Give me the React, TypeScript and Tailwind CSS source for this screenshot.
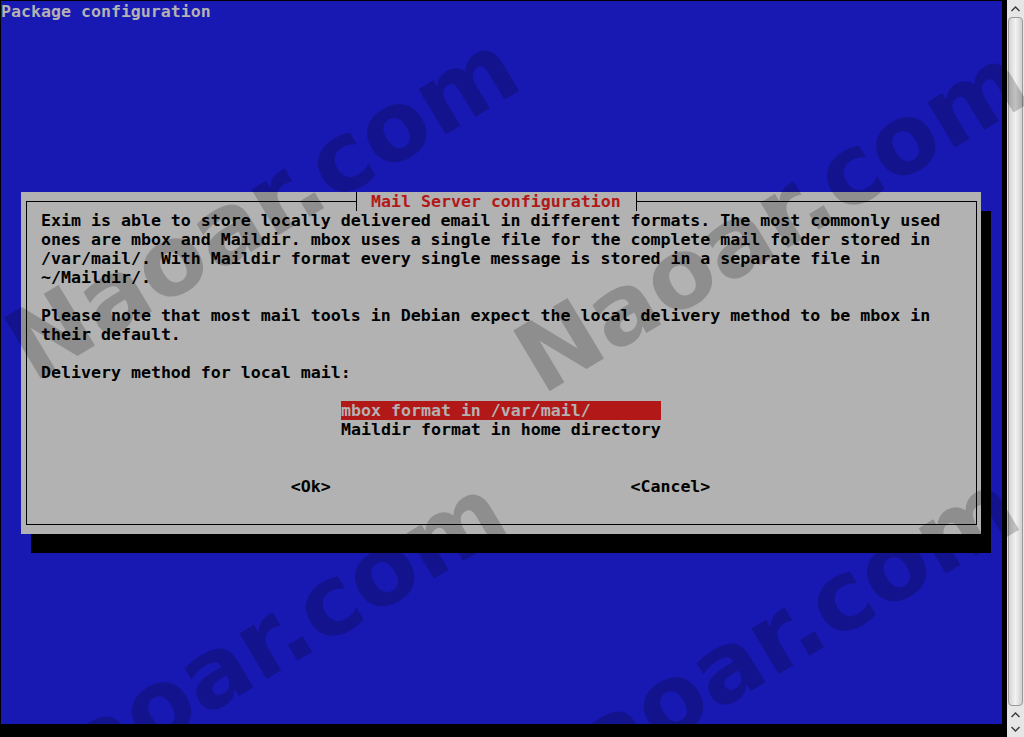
import React from "react";

const body: string[] = [
  "Exim is able to store locally delivered email in different formats. The most commonly used",
  "ones are mbox and Maildir. mbox uses a single file for the complete mail folder stored in",
  "/var/mail/. With Maildir format every single message is stored in a separate file in",
  "~/Maildir/.",
  "",
  "Please note that most mail tools in Debian expect the local delivery method to be mbox in",
  "their default.",
  "",
  "Delivery method for local mail:",
  "",
];

const buttons = " ".repeat(25) + "<Ok>" + " ".repeat(30) + "<Cancel>";

function Chevron({ up }: { up: boolean }) {
  return (
    <svg width="11" height="7" viewBox="0 0 11 7" className="block">
      <polyline
        points={up ? "1.5,6 5.5,2 9.5,6" : "1.5,1 5.5,5 9.5,1"}
        fill="none"
        stroke="#3a3a3a"
        strokeWidth="1.4"
      />
    </svg>
  );
}

function Watermark({ x, y }: { x: number; y: number }) {
  return (
    <div
      className="absolute pointer-events-none whitespace-nowrap font-['DejaVu_Sans'] font-bold text-[97px] leading-none text-black/20 -translate-x-1/2 -translate-y-1/2 rotate-[-31deg]"
      style={{ left: x, top: y }}
    >
      Naoar.com
    </div>
  );
}

export default function App() {
  return (
    <div className="relative w-[1024px] h-[737px] bg-black overflow-hidden flex font-['DejaVu_Sans_Mono'] font-bold text-[16.6px] leading-[19px]">
      {/* terminal */}
      <div className="w-[1007px] h-[737px] pl-px pt-px">
        <div className="w-[1001px] h-[723px] bg-[#1818b2] pt-px">
          <div className="h-[19px] whitespace-pre text-[#b2b2b2]">Package configuration</div>
          <div className="h-[171px]" />
          {/* dialog */}
          <div className="relative ml-[20px] w-[960px] h-[342px] bg-[#b2b2b2] shadow-[10px_19px_0_0_#000] pt-[9px] pb-[9px] pl-[5px] pr-[4px]">
            <div className="h-[324px] border border-black pt-[9px] pl-[14px] text-black">
              {body.map((line, i) => (
                <div key={i} className="h-[19px] whitespace-pre">
                  {line}
                </div>
              ))}
              <div className="h-[19px] pl-[300px]">
                <div className="w-[320px] h-[19px] bg-[#b21818] text-[#b2b2b2] whitespace-pre">
                  mbox format in /var/mail/
                </div>
              </div>
              <div className="h-[19px] pl-[300px] whitespace-pre">Maildir format in home directory</div>
              <div className="h-[19px]" />
              <div className="h-[19px]" />
              <div className="h-[19px] whitespace-pre">{buttons}</div>
              <div className="h-[19px]" />
            </div>
            {/* title */}
            <div className="absolute top-0 left-[330px] w-[290px] h-[19px] bg-[#b2b2b2] flex">
              <div className="relative w-[10px] h-[19px]">
                <div className="absolute left-0 top-[9px] w-[5px] h-px bg-black" />
                <div className="absolute left-[5px] top-0 w-px h-[19px] bg-black" />
              </div>
              <div className="w-[260px] pl-[10px] whitespace-pre text-[#b21818]">Mail Server configuration</div>
              <div className="relative w-[10px] h-[19px] ml-[10px]">
                <div className="absolute left-[5px] top-[9px] w-[5px] h-px bg-black" />
                <div className="absolute left-[5px] top-0 w-px h-[19px] bg-black" />
              </div>
            </div>
          </div>
        </div>
      </div>
      {/* scrollbar */}
      <div className="w-[17px] h-[737px] bg-[#e6e6e6] flex flex-col items-center">
        <div className="h-[17px] flex items-center justify-center">
          <Chevron up />
        </div>
        <div className="w-[15px] flex-1 rounded-[4px] border border-[#9a9a9a] bg-gradient-to-r from-[#d4d4d4] via-[#f2f2f2] to-[#cfcfcf]" />
        <div className="h-[15px] flex items-center justify-center mt-px">
          <Chevron up />
        </div>
        <div className="h-[15px] flex items-center justify-center">
          <Chevron up={false} />
        </div>
      </div>
      <Watermark x={262} y={206} />
      <Watermark x={771} y={219} />
      <Watermark x={250} y={650} />
      <Watermark x={762} y={645} />
    </div>
  );
}
